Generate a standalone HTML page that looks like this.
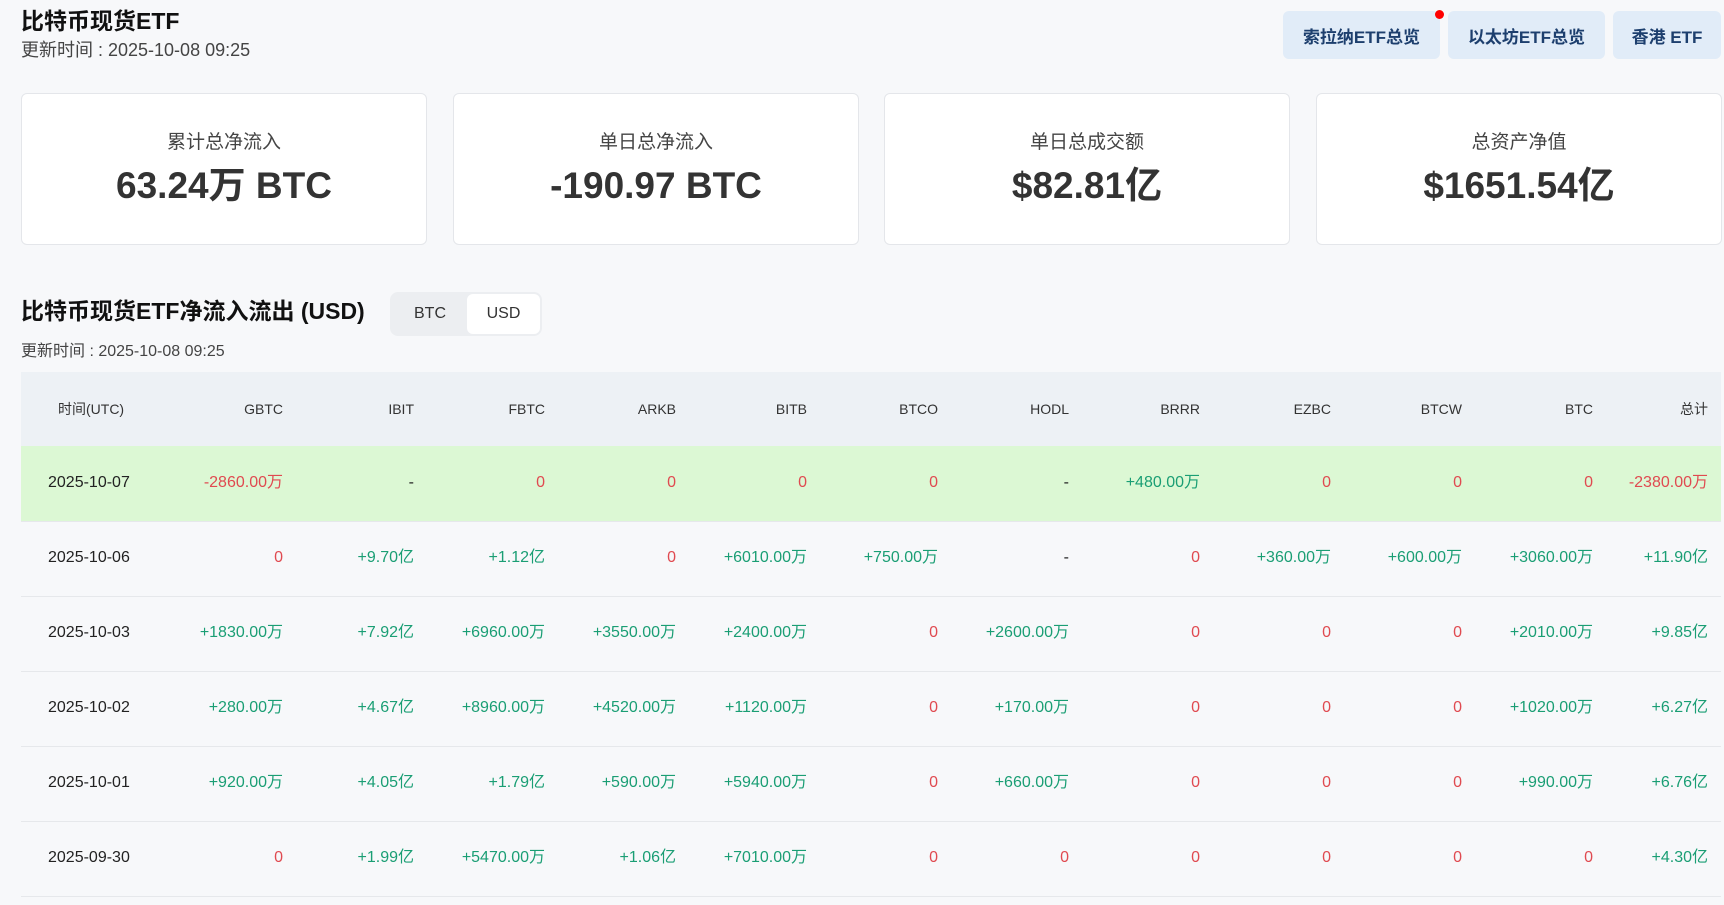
<!DOCTYPE html>
<html><head><meta charset="utf-8"><style>
*{box-sizing:border-box;margin:0;padding:0}
body{width:1724px;height:905px;background:#f7f8fa;font-family:"Liberation Sans","Noto Sans CJK SC",sans-serif;color:#222;position:relative;overflow:hidden}
.abs{position:absolute}
h1{position:absolute;left:21px;top:6px;font-size:23px;font-weight:bold;color:#111;line-height:30px}
.upd{position:absolute;left:21px;color:#444;line-height:1.2}
.btn{position:absolute;top:11px;height:48px;background:#e1ecf8;border-radius:6px;color:#1d3f6e;font-weight:bold;font-size:17px;display:flex;align-items:center;justify-content:center}
.card{position:absolute;top:93px;height:152px;width:406px;background:#fff;border:1px solid #e4e6ea;border-radius:6px;text-align:center}
.card .l{margin-top:37px;font-size:19px;color:#444;line-height:24px}
.card .v{margin-top:9px;font-size:37px;font-weight:bold;color:#333;line-height:44px;height:44px}
table{position:absolute;left:21px;top:372px;border-collapse:collapse;table-layout:fixed;width:1700px}
th{height:74px;background:#edf1f5;font-weight:normal;font-size:14px;color:#333;text-align:right;line-height:18px}
td{height:75px;font-size:16px;text-align:right;border-bottom:1px solid #e6e8eb;line-height:20px;vertical-align:middle}
td span{display:inline-block;height:20px;line-height:20px;vertical-align:middle}
td:first-child,th:first-child{text-align:left;padding-left:27px}
th:first-child{padding-left:37px}
th:last-child,td:last-child{padding-right:13px}
tr.g td{background:#dcf8d4}
.r{color:#e04a50}.p{color:#1a9e74}
</style></head><body>
<h1>比特币现货ETF</h1>
<div class="upd" style="top:40px;font-size:18px">更新时间 : 2025-10-08 09:25</div>
<div class="btn" style="left:1283px;width:157px">索拉纳ETF总览</div>
<div class="abs" style="left:1435px;top:10px;width:9px;height:9px;border-radius:50%;background:#f00"></div>
<div class="btn" style="left:1448px;width:157px">以太坊ETF总览</div>
<div class="btn" style="left:1613px;width:108px">香港 ETF</div>
<div class="card" style="left:21px"><div class="l">累计总净流入</div><div class="v">63.24万 BTC</div></div>
<div class="card" style="left:453px"><div class="l">单日总净流入</div><div class="v">-190.97 BTC</div></div>
<div class="card" style="left:884px"><div class="l">单日总成交额</div><div class="v">$82.81亿</div></div>
<div class="card" style="left:1316px"><div class="l">总资产净值</div><div class="v">$1651.54亿</div></div>
<div class="abs" style="left:21px;top:296px;font-size:23px;font-weight:bold;color:#111;line-height:30px">比特币现货ETF净流入流出 (USD)</div>
<div class="abs" style="left:390px;top:292px;width:152px;height:44px;background:#eceef1;border-radius:8px"></div>
<div class="abs" style="left:393px;top:294px;width:74px;height:40px;line-height:40px;text-align:center;font-size:16px;color:#333">BTC</div>
<div class="abs" style="left:467px;top:294px;width:73px;height:40px;line-height:40px;text-align:center;font-size:16px;background:#fff;border-radius:6px;color:#333">USD</div>
<div class="upd" style="top:342px;font-size:16px">更新时间 : 2025-10-08 09:25</div>
<table>
<colgroup><col style="width:131px"><col span="11" style="width:131px"><col style="width:128px"></colgroup>
<tr><th>时间(UTC)</th><th>GBTC</th><th>IBIT</th><th>FBTC</th><th>ARKB</th><th>BITB</th><th>BTCO</th><th>HODL</th><th>BRRR</th><th>EZBC</th><th>BTCW</th><th>BTC</th><th>总计</th></tr>
<tr class="g"><td><span>2025-10-07</span></td><td class="r"><span>-2860.00万</span></td><td><span>-</span></td><td class="r"><span>0</span></td><td class="r"><span>0</span></td><td class="r"><span>0</span></td><td class="r"><span>0</span></td><td><span>-</span></td><td class="p"><span>+480.00万</span></td><td class="r"><span>0</span></td><td class="r"><span>0</span></td><td class="r"><span>0</span></td><td class="r"><span>-2380.00万</span></td></tr>
<tr><td><span>2025-10-06</span></td><td class="r"><span>0</span></td><td class="p"><span>+9.70亿</span></td><td class="p"><span>+1.12亿</span></td><td class="r"><span>0</span></td><td class="p"><span>+6010.00万</span></td><td class="p"><span>+750.00万</span></td><td><span>-</span></td><td class="r"><span>0</span></td><td class="p"><span>+360.00万</span></td><td class="p"><span>+600.00万</span></td><td class="p"><span>+3060.00万</span></td><td class="p"><span>+11.90亿</span></td></tr>
<tr><td><span>2025-10-03</span></td><td class="p"><span>+1830.00万</span></td><td class="p"><span>+7.92亿</span></td><td class="p"><span>+6960.00万</span></td><td class="p"><span>+3550.00万</span></td><td class="p"><span>+2400.00万</span></td><td class="r"><span>0</span></td><td class="p"><span>+2600.00万</span></td><td class="r"><span>0</span></td><td class="r"><span>0</span></td><td class="r"><span>0</span></td><td class="p"><span>+2010.00万</span></td><td class="p"><span>+9.85亿</span></td></tr>
<tr><td><span>2025-10-02</span></td><td class="p"><span>+280.00万</span></td><td class="p"><span>+4.67亿</span></td><td class="p"><span>+8960.00万</span></td><td class="p"><span>+4520.00万</span></td><td class="p"><span>+1120.00万</span></td><td class="r"><span>0</span></td><td class="p"><span>+170.00万</span></td><td class="r"><span>0</span></td><td class="r"><span>0</span></td><td class="r"><span>0</span></td><td class="p"><span>+1020.00万</span></td><td class="p"><span>+6.27亿</span></td></tr>
<tr><td><span>2025-10-01</span></td><td class="p"><span>+920.00万</span></td><td class="p"><span>+4.05亿</span></td><td class="p"><span>+1.79亿</span></td><td class="p"><span>+590.00万</span></td><td class="p"><span>+5940.00万</span></td><td class="r"><span>0</span></td><td class="p"><span>+660.00万</span></td><td class="r"><span>0</span></td><td class="r"><span>0</span></td><td class="r"><span>0</span></td><td class="p"><span>+990.00万</span></td><td class="p"><span>+6.76亿</span></td></tr>
<tr><td><span>2025-09-30</span></td><td class="r"><span>0</span></td><td class="p"><span>+1.99亿</span></td><td class="p"><span>+5470.00万</span></td><td class="p"><span>+1.06亿</span></td><td class="p"><span>+7010.00万</span></td><td class="r"><span>0</span></td><td class="r"><span>0</span></td><td class="r"><span>0</span></td><td class="r"><span>0</span></td><td class="r"><span>0</span></td><td class="r"><span>0</span></td><td class="p"><span>+4.30亿</span></td></tr>
</table>
</body></html>
